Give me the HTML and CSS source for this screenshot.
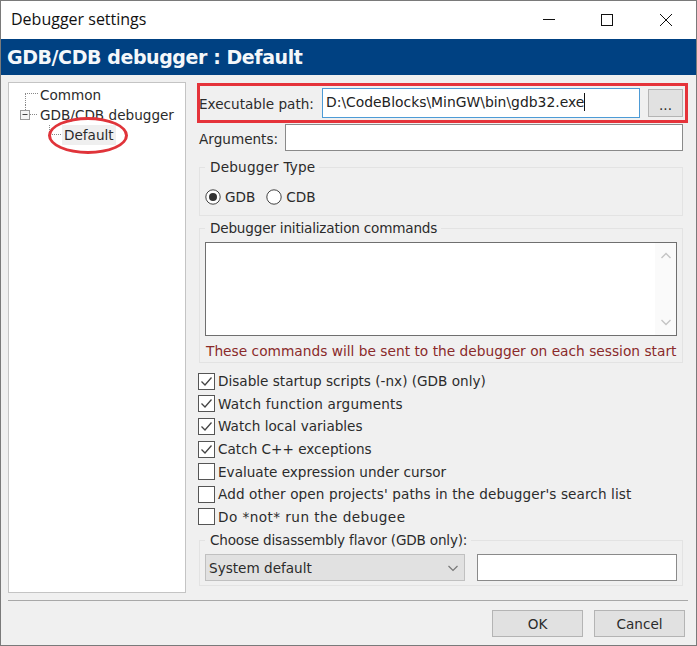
FILE: index.html
```html
<!DOCTYPE html>
<html lang="en">
<head>
<meta charset="utf-8">
<title>Debugger settings</title>
<link rel="stylesheet" href="styles.css">
</head>
<body>
<div class="window">
  <header class="titlebar">
    <span class="title">Debugger settings</span>
    <div class="controls">
      <svg class="ctl" width="14" height="14" viewBox="0 0 14 14"><path d="M2 6.5H14" stroke="#111" fill="none"/></svg>
      <svg class="ctl" width="14" height="14" viewBox="0 0 14 14"><rect x="1.5" y="1.5" width="11" height="11" stroke="#111" fill="none"/></svg>
      <svg class="ctl" width="14" height="14" viewBox="0 0 14 14"><path d="M1 1L13 13M13 1L1 13" stroke="#111" fill="none"/></svg>
    </div>
  </header>
  <div class="banner">GDB/CDB debugger : Default</div>
  <main class="main">
    <nav class="tree">
      <div class="tree-row">
        <svg class="tree-svg" width="31" height="20" viewBox="0 0 31 20"><path d="M16.5 9V20M16 8.5H29" stroke="#888" stroke-dasharray="1 1" fill="none"/></svg>
        <span class="tree-label">Common</span>
      </div>
      <div class="tree-row">
        <svg class="tree-svg" width="31" height="20" viewBox="0 0 31 20"><path d="M16.5 0V5M21 9.5H29" stroke="#888" stroke-dasharray="1 1" fill="none"/><rect x="11.5" y="5.5" width="9" height="9" fill="#f4f4f4" stroke="#9a9a9a"/><path d="M13.5 9.5H18.5" stroke="#444" fill="none"/></svg>
        <span class="tree-label">GDB/CDB debugger</span>
      </div>
      <div class="tree-row tree-child">
        <svg class="tree-svg" width="53" height="20" viewBox="0 0 53 20"><path d="M40.5 0V9M41 9.5H52" stroke="#888" stroke-dasharray="1 1" fill="none"/></svg>
        <span class="tree-label selected">Default</span>
        <span class="ellipse"></span>
      </div>
    </nav>
    <section class="panel">
      <div class="exec-row">
        <label class="exec-label">Executable path:</label>
        <div class="field field-focus">D:\CodeBlocks\MinGW\bin\gdb32.exe<span class="caret"></span></div>
        <div class="btn btn-dots">...</div>
      </div>
      <div class="args-row">
        <label class="args-label">Arguments:</label>
        <div class="field field-args"></div>
      </div>
      <fieldset class="group group-type">
        <legend>Debugger Type</legend>
        <div class="radios">
          <svg class="radio" width="16" height="16" viewBox="0 0 16 16"><circle cx="8" cy="8" r="7.2" fill="#fff" stroke="#444"/><circle cx="8" cy="8" r="4" fill="#333"/></svg>
          <span class="radio-label">GDB</span>
          <svg class="radio" width="16" height="16" viewBox="0 0 16 16"><circle cx="8" cy="8" r="7.2" fill="#fff" stroke="#444"/></svg>
          <span>CDB</span>
        </div>
      </fieldset>
      <fieldset class="group group-init">
        <legend>Debugger initialization commands</legend>
        <div class="textarea">
          <div class="scrollbar">
            <svg width="12" height="8" viewBox="0 0 12 8"><path d="M1.5 6L6 1.5L10.5 6" stroke="#c4c4c4" stroke-width="1.4" fill="none"/></svg>
            <svg width="12" height="8" viewBox="0 0 12 8"><path d="M1.5 2L6 6.5L10.5 2" stroke="#c4c4c4" stroke-width="1.4" fill="none"/></svg>
          </div>
        </div>
        <div class="note">These commands will be sent to the debugger on each session start</div>
      </fieldset>
      <ul class="checks">
        <li><svg class="box" width="17" height="17" viewBox="0 0 17 17"><rect x="0.5" y="0.5" width="16" height="16" fill="#fff" stroke="#555"/><path d="M3.5 8.5L7 12L13.5 4.5" stroke="#444" stroke-width="1.3" fill="none"/></svg>Disable startup scripts (-nx) (GDB only)</li>
        <li class="loose"><svg class="box" width="17" height="17" viewBox="0 0 17 17"><rect x="0.5" y="0.5" width="16" height="16" fill="#fff" stroke="#555"/><path d="M3.5 8.5L7 12L13.5 4.5" stroke="#444" stroke-width="1.3" fill="none"/></svg>Watch function arguments</li>
        <li><svg class="box" width="17" height="17" viewBox="0 0 17 17"><rect x="0.5" y="0.5" width="16" height="16" fill="#fff" stroke="#555"/><path d="M3.5 8.5L7 12L13.5 4.5" stroke="#444" stroke-width="1.3" fill="none"/></svg>Watch local variables</li>
        <li><svg class="box" width="17" height="17" viewBox="0 0 17 17"><rect x="0.5" y="0.5" width="16" height="16" fill="#fff" stroke="#555"/><path d="M3.5 8.5L7 12L13.5 4.5" stroke="#444" stroke-width="1.3" fill="none"/></svg>Catch C++ exceptions</li>
        <li><svg class="box" width="17" height="17" viewBox="0 0 17 17"><rect x="0.5" y="0.5" width="16" height="16" fill="#fff" stroke="#555"/></svg>Evaluate expression under cursor</li>
        <li class="slightly-loose"><svg class="box" width="17" height="17" viewBox="0 0 17 17"><rect x="0.5" y="0.5" width="16" height="16" fill="#fff" stroke="#555"/></svg>Add other open projects' paths in the debugger's search list</li>
        <li class="very-loose"><svg class="box" width="17" height="17" viewBox="0 0 17 17"><rect x="0.5" y="0.5" width="16" height="16" fill="#fff" stroke="#555"/></svg>Do *not* run the debugee</li>
      </ul>
      <fieldset class="group group-flavor">
        <legend>Choose disassembly flavor (GDB only):</legend>
        <div class="flavor-row">
          <div class="select">System default
            <svg width="12" height="8" viewBox="0 0 12 8"><path d="M1.5 2L6 6.5L10.5 2" stroke="#777" stroke-width="1.2" fill="none"/></svg>
          </div>
          <div class="field field-flavor"></div>
        </div>
      </fieldset>
    </section>
  </main>
  <footer class="footer">
    <div class="btn btn-action">OK</div>
    <div class="btn btn-action">Cancel</div>
  </footer>
</div>
</body>
</html>
```
FILE: styles.css
```css
* { box-sizing: border-box; }
html, body { margin: 0; padding: 0; }
body {
  width: 697px;
  height: 646px;
  overflow: hidden;
  font-family: "DejaVu Sans", sans-serif;
  font-size: 13.6px;
  color: #2b2b2b;
}
.window {
  width: 697px;
  height: 646px;
  display: flex;
  flex-direction: column;
  background: #f0f0f0;
  border: 1px solid #7a7a7a;
}
.titlebar {
  height: 38px;
  flex: none;
  background: #fff;
  display: flex;
  align-items: center;
  justify-content: space-between;
  padding: 0 23px 0 10px;
}
.title {
  font-family: "Open Sans", sans-serif;
  font-size: 16px;
  line-height: 36px;
  margin-top: -2px;
  color: #111;
}
.controls { display: flex; gap: 45px; }
.ctl { display: block; }
.banner {
  height: 36px;
  flex: none;
  background: #004182;
  color: #f4f7fa;
  font-family: "DejaVu Sans", sans-serif;
  font-weight: 700;
  font-size: 19px;
  letter-spacing: -0.42px;
  line-height: 36px;
  padding-left: 6px;
}
.main {
  flex: none;
  height: 525px;
  display: flex;
  padding: 7px 0 0 7px;
  gap: 11px;
}
.tree {
  width: 178px;
  height: 511px;
  flex: none;
  background: #fff;
  border: 1px solid #c4c4c4;
  padding-top: 2px;
}
.tree-row {
  height: 20px;
  display: flex;
  align-items: center;
  position: relative;
  line-height: 20px;
}
.tree-svg { flex: none; display: block; }
.tree-label { white-space: nowrap; }
.selected { background: #efefef; padding: 0 2px; }
.ellipse {
  position: absolute;
  left: 39px;
  top: -8px;
  width: 80px;
  height: 37px;
  border: 3px solid #e0343a;
  border-radius: 50%;
}
.panel { flex: none; width: 491px; }
.exec-row {
  height: 40px;
  width: 491px;
  margin-top: 1px;
  display: flex;
  align-items: center;
  border: 3px solid #e5333a;
}
.exec-label { width: 123px; flex: none; margin-left: -1px; white-space: nowrap; padding-top: 2px; }
.field {
  background: #fff;
  border: 1px solid #a0a0a0;
  white-space: nowrap;
}
.field-focus {
  width: 318px;
  height: 30px;
  flex: none;
  border-color: #4d9bd6;
  font-size: 13.9px;
  line-height: 26px;
  padding-left: 3px;
  color: #222;
}
.caret {
  display: inline-block;
  width: 1px;
  height: 18px;
  background: #111;
  vertical-align: -4px;
}
.btn {
  background: #e1e1e1;
  border: 1px solid #b4b4b4;
  display: flex;
  align-items: center;
  justify-content: center;
}
.btn-dots {
  width: 35px;
  height: 28px;
  margin-left: 8px;
  flex: none;
  line-height: 1;
  padding-top: 6px;
}
.args-row {
  margin-top: 1px;
  height: 27px;
  display: flex;
  align-items: center;
  padding-left: 2px;
}
.args-label { width: 86px; flex: none; padding-top: 2px; }
.field-args {
  width: 398px;
  height: 27px;
  flex: none;
  border-color: #8a8a8a;
  padding: 0;
}
.group {
  margin: 0 0 0 2px;
  padding: 0 5px;
  width: 484px;
  border: 1px solid #e3e3e3;
  min-width: 0;
}
.group legend {
  margin-left: 0;
  padding: 0 4px 0 5px;
  line-height: 18px;
  white-space: nowrap;
}
.group-type legend { letter-spacing: 0.2px; }
.group-init legend, .group-flavor legend { letter-spacing: -0.2px; }
.group-type { height: 58px; margin-top: 7px; }
.radios {
  display: flex;
  align-items: center;
  padding-top: 13px;
}
.radio { flex: none; display: block; margin-right: 4px; }
.radio-label { margin-right: 11px; }
.group-init { height: 144px; margin-top: 3px; }
.textarea {
  height: 94px;
  margin-top: 5px;
  background: #fff;
  border: 1px solid #6f6f6f;
  display: flex;
  justify-content: flex-end;
}
.scrollbar {
  width: 21px;
  background: #fafafa;
  display: flex;
  flex-direction: column;
  justify-content: space-between;
  align-items: center;
  padding: 9px 0;
}
.scrollbar svg { display: block; }
.note {
  color: #8a2a2a;
  font-size: 13.75px;
  line-height: 22px;
  margin-top: 4px;
  padding-left: 1px;
  white-space: nowrap;
}
.checks {
  list-style: none;
  margin: 7px 0 0 1px;
  padding: 0;
}
.checks li {
  height: 22.6px;
  display: flex;
  align-items: center;
  white-space: nowrap;
}
.checks .slightly-loose { letter-spacing: 0.1px; }
.checks .loose { letter-spacing: 0.2px; }
.checks .very-loose { letter-spacing: 0.45px; }
.box { flex: none; display: block; margin-right: 3px; }
.group-flavor { height: 55px; margin-top: 3px; }
.flavor-row {
  display: flex;
  gap: 12px;
  padding-top: 5px;
}
.select {
  width: 260px;
  height: 27px;
  flex: none;
  background: #e1e1e1;
  border: 1px solid #c0c0c0;
  display: flex;
  align-items: center;
  justify-content: space-between;
  padding: 0 5px 0 3px;
}
.select svg { display: block; }
.field-flavor {
  width: 200px;
  height: 27px;
  flex: none;
  border-color: #8a8a8a;
}
.footer {
  flex: 1;
  margin: 0 8px 0 7px;
  border-top: 1px solid #a8a8a8;
  display: flex;
  justify-content: flex-end;
  gap: 11px;
  padding: 9px 3px 0 0;
}
.btn-action { width: 91px; height: 27px; }
```
